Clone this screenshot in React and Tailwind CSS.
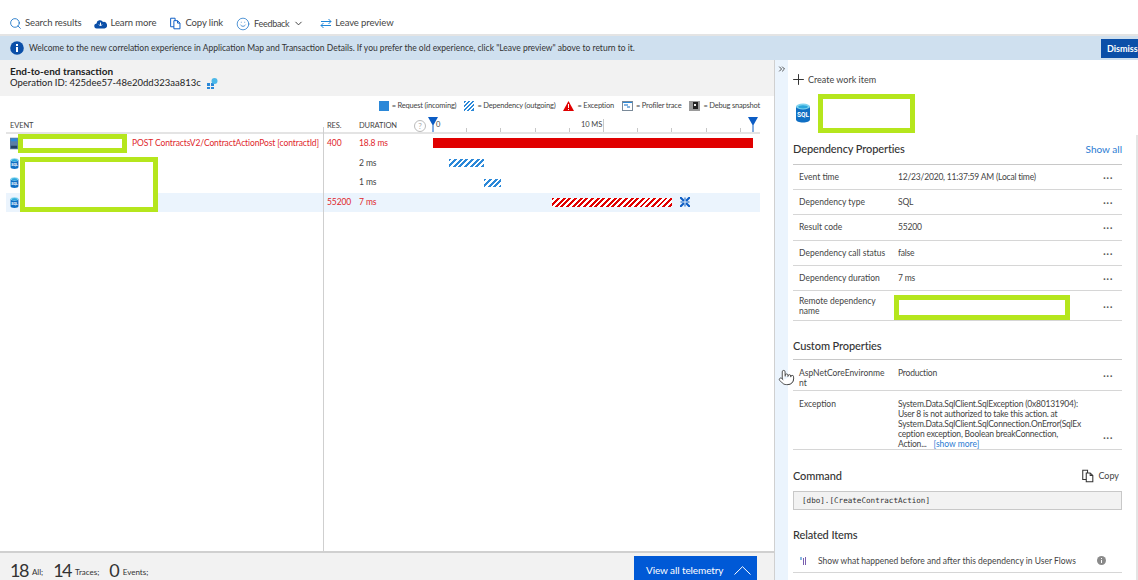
import React from 'react';
import { Search, Plus, ChevronDown, ChevronsRight, Smile, Pointer } from 'lucide-react';

const font = { fontFamily: 'Lato, "Noto Sans", sans-serif' };

const CopyIcon = ({ size = 14, stroke = '#0b5cc4' }) => (
  <svg width={size} height={size} viewBox="0 0 16 16" fill="none" stroke={stroke} strokeWidth="1.2">
    <path d="M2 1.500h5.500v10.500H2z" fill="#fff" />
    <path d="M6 4.500h4.500l3 3v7H6z" fill="#fff" />
    <path d="M10.500 4.500v3h3" />
  </svg>
);

const SqlIcon = ({ size = 14 }) => (
  <svg width={size} height={size * 1.25} viewBox="0 0 16 20">
    <path d="M1 3.500v13c0 1.700 3.100 3 7 3s7-1.300 7-3v-13z" fill="#0f6fc4" />
    <ellipse cx="8" cy="3.500" rx="7" ry="3" fill="#7fd3ef" />
    <ellipse cx="8" cy="3.800" rx="4.800" ry="1.600" fill="#2aa7dc" />
    <text x="8" y="13.500" textAnchor="middle" fontSize="6.500" fontWeight="700" fill="#fff" fontFamily="Roboto, sans-serif">SQL</text>
  </svg>
);

const ServerIcon = () => (
  <svg width="8" height="13" viewBox="0 0 9 13" className="shrink-0">
    <rect width="9" height="13" fill="#5a7ea6" />
    <rect x="1" y="1" width="7" height="3" fill="#2b88d8" />
    <rect x="1" y="9" width="7" height="3" fill="#23405f" />
  </svg>
);

const ToolItem = ({ icon, label, className = '' }) => (
  <div className={`flex items-center gap-[3px] text-[9.500px] tracking-[-0.1px] text-[#444] ${className}`}>
    {icon}
    <span>{label}</span>
  </div>
);

const Toolbar = () => (
  <div className="h-[36px] pt-[13px] pl-[9px] flex items-center gap-[13px] border-b-2 border-[#e4e4e4]">
    <ToolItem icon={<Search size={13} color="#0b6ac4" strokeWidth={1.5} />} label="Search results" />
    <ToolItem
      icon={
        <svg width="13" height="10" viewBox="0 0 13 10">
          <path d="M3 9.500a2.500 2.500 0 0 1-.5-5A3.500 3.500 0 0 1 9 3a3 3 0 0 1 1.500 6.500z" fill="#0b4fa8" />
          <path d="M6.500 3.500v3M5 5.500l1.500 1.500L8 5.500" stroke="#fff" fill="none" />
        </svg>
      }
      label="Learn more"
    />
    <ToolItem icon={<CopyIcon size={13} />} label="Copy link" />
    <div className="flex items-center gap-[4px] text-[9px] tracking-[-0.3px] text-[#444]">
      <Smile size={14} color="#0b6ac4" strokeWidth={1.2} />
      <span>Feedback</span>
      <ChevronDown size={11} color="#333" />
    </div>
    <ToolItem
      className="ml-[3px]"
      icon={
        <svg width="12" height="11" viewBox="0 0 12 11" fill="none" stroke="#1f86d8" strokeWidth="1">
          <path d="M1 3.500h10M8.500 1l2.500 2.500L8.500 6M11 7.500H1M3.500 5L1 7.500 3.500 10" />
        </svg>
      }
      label="Leave preview"
    />
  </div>
);

const Banner = () => (
  <div className="h-[24px] bg-[#cfe0ef] flex items-center pl-[10px] text-[8.500px] text-[#333]">
    <svg width="14" height="14" viewBox="0 0 14 14" className="mr-[5px]">
      <circle cx="7" cy="7" r="6.800" fill="#0b4fa8" />
      <rect x="6" y="6" width="2" height="5" fill="#fff" />
      <rect x="6" y="3" width="2" height="2" fill="#fff" />
    </svg>
    <span>Welcome to the new correlation experience in Application Map and Transaction Details. If you prefer the old experience, click "Leave preview" above to return to it.</span>
    <div className="ml-auto w-[37px] h-[19px] bg-[#0b4fa8] text-white font-bold text-[9px] leading-[19px] pl-[6px] whitespace-nowrap">Dismiss</div>
  </div>
);

const LegendItem = ({ icon, label }) => (
  <div className="flex items-center gap-[3px]">
    {icon}
    <span>{label}</span>
  </div>
);

const Legend = () => (
  <div className="h-[19px] flex items-center justify-end gap-[8px] pr-[14px] text-[7.500px] tracking-[-0.2px] text-[#444]">
    <LegendItem icon={<div className="w-[10px] h-[10px] bg-[#2b88d8]" />} label="= Request (incoming)" />
    <LegendItem
      icon={<div className="w-[10px] h-[10px] bg-[repeating-linear-gradient(135deg,#2b88d8_0,#2b88d8_1.500px,#fff_1.500px,#fff_3px)]" />}
      label="= Dependency (outgoing)"
    />
    <LegendItem
      icon={
        <svg width="11" height="10" viewBox="0 0 11 10">
          <path d="M5.500 0L11 10H0z" fill="#e00000" />
          <rect x="5" y="3" width="1" height="4" fill="#fff" />
          <rect x="5" y="8" width="1" height="1" fill="#fff" />
        </svg>
      }
      label="= Exception"
    />
    <LegendItem
      icon={
        <svg width="11" height="10" viewBox="0 0 11 10" fill="none">
          <rect x=".5" y=".5" width="10" height="9" stroke="#7a8a99" fill="#fff" />
          <path d="M1 1.500h9" stroke="#2b88d8" />
          <path d="M2 4h4M5 6h3" stroke="#0b6ac4" />
        </svg>
      }
      label="= Profiler trace"
    />
    <LegendItem
      icon={
        <svg width="11" height="10" viewBox="0 0 11 10">
          <rect width="11" height="10" fill="#9a9a9a" />
          <rect x="4" y="1" width="5" height="7" fill="#222" />
          <rect x="5" y="3" width="2" height="2" fill="#eee" />
        </svg>
      }
      label="= Debug snapshot"
    />
  </div>
);

const Marker = () => (
  <svg width="10" height="15" viewBox="0 0 10 15" className="relative">
    <path d="M0 0h10L5.500 8v7h-1V8z" fill="#0b5cc4" />
  </svg>
);

const ticks = [0, 1, 2, 3, 4, 5, 6, 7, 8];

const TableHeader = () => (
  <div className="h-[19px] ml-[6px] w-[754px] flex text-[7.500px] tracking-[-0.1px] text-[#444] border-b-2 border-[#e4e4e4]">
    <div className="w-[321px] pl-[4px] pt-[5px]">EVENT</div>
    <div className="w-[32px] pt-[5px]">RES.</div>
    <div className="w-[69px] pt-[5px]">DURATION</div>
    <div className="relative flex-1 flex items-end justify-between pr-[2px]">
      <Marker />
      <div className="absolute left-[5px] bottom-0 flex items-end">
        {ticks.map((t) => (
          <div key={t} className={`w-[34.200px] border-r border-[#c8c8c8] ${t === 4 ? 'h-[13px]' : 'h-[4px]'}`} />
        ))}
      </div>
      <span className="absolute left-[8px] top-[4px]">0</span>
      <span className="absolute left-[153px] top-[4px]">10 MS</span>
      <Marker />
    </div>
  </div>
);

const Row = ({ event, res, duration, red, selected, children }) => (
  <div className={`h-[19.500px] ml-[6px] w-[754px] flex items-center text-[8.500px] tracking-[-0.1px] ${selected ? 'bg-[#ebf4fd]' : ''} ${red ? 'text-[#e0262b]' : 'text-[#444]'}`}>
    <div className="w-[321px] pl-[4px] flex items-center whitespace-nowrap">{event}</div>
    <div className="w-[32px]">{res}</div>
    <div className="w-[74px]">{duration}</div>
    <div className="flex-1 flex items-center">{children}</div>
  </div>
);

const hatchBlue = 'bg-[repeating-linear-gradient(135deg,#2b88d8_0,#2b88d8_2px,#fff_2px,#fff_4px)]';
const hatchRed = 'bg-[repeating-linear-gradient(135deg,#e00000_0,#e00000_2px,#fff_2px,#fff_4px)]';

const Timeline = () => (
  <div className="relative flex-1 min-h-0">
    <Legend />
    <TableHeader />
    <Row
      red
      res="400"
      duration="18.8 ms"
      event={
        <>
          <ServerIcon />
          <div className="w-[109px] h-[19px] mr-[5px] border-[5px] border-[#b5e61d] bg-white shrink-0" />
          <span>POST ContractsV2/ContractActionPost [contractId]</span>
        </>
      }
    >
      <div className="w-[320px] h-[10px] mb-[2px] bg-[#e00000]" />
    </Row>
    <Row event={<SqlIcon size={9} />} duration="2 ms">
      <div className={`ml-[16px] w-[35px] h-[8px] ${hatchBlue}`} />
    </Row>
    <Row event={<SqlIcon size={9} />} duration="1 ms">
      <div className={`ml-[51px] w-[17px] h-[8px] ${hatchBlue}`} />
    </Row>
    <Row red selected event={<SqlIcon size={9} />} res="55200" duration="7 ms">
      <div className={`ml-[119px] w-[120px] h-[9px] ${hatchRed}`} />
      <svg width="10" height="10" viewBox="0 0 10 10" className="ml-[8px]" fill="#0b5cc4">
        <path d="M0 0h1.500L4 2.500V.5h.5V4.500H.5V4h2L0 1.500zM10 0v1.500L7.500 4h2v.5H5.500V.5H6v2L8.500 0zM0 10V8.500L2.500 6h-2v-.5h4v4H4v-2L1.500 10zM10 10H8.500L6 7.500v2h-.5v-4h4V6h-2L10 8.500z" />
      </svg>
    </Row>
    {/* redaction box over the three SQL rows */}
    <div className="absolute left-[20px] top-[61px] w-[138px] h-[55px] border-[5px] border-[#b5e61d] bg-white" />
    {/* column divider */}
    <div className="absolute left-[323px] top-[31px] bottom-0 w-px bg-[#cfcfcf]" />
    <div className="absolute left-[414px] top-[24px] w-[12px] h-[12px] rounded-full border border-[#bbb] text-[8px] leading-[10px] text-center text-[#aaa]">?</div>
  </div>
);

const Footer = () => (
  <div className="h-[29px] border-t-2 border-[#d0d0d0] bg-[#f2f2f2] flex items-end pl-[10px] text-[#333]">
    <span className="text-[18px] leading-[20px] tracking-[-1.500px]">18</span>
    <span className="text-[8px] ml-[4px] mb-[2px] mr-[10px]">All;</span>
    <span className="text-[18px] leading-[20px] tracking-[-1.500px]">14</span>
    <span className="text-[8px] ml-[4px] mb-[2px] mr-[10px]">Traces;</span>
    <span className="text-[18px] leading-[20px]">0</span>
    <span className="text-[8px] ml-[3px] mb-[2px]">Events;</span>
    <div className="ml-auto mr-[17px] w-[123px] h-[24px] bg-[#0059d6] text-white text-[10px] tracking-[-0.1px] flex items-center pl-[12px] pt-[4px]">
      <span>View all telemetry</span>
      <svg width="17" height="9" viewBox="0 0 17 9" fill="none" stroke="#fff" strokeWidth="1" className="ml-auto mr-[6px]">
        <path d="M.5 8.500L8.500 .7l8 7.800" />
      </svg>
    </div>
  </div>
);

const LeftPane = () => (
  <div className="w-[774px] shrink-0 flex flex-col">
    <div className="h-[36px] bg-[#f2f2f2] pl-[10px] pt-[5px] text-[#222] text-[9.500px] leading-[12px]">
      <div className="font-bold text-[10px]">End-to-end transaction</div>
      <div className="flex items-center gap-[6px]">
        <span>Operation ID: 425dee57-48e20dd323aa813c</span>
        <svg width="11" height="11" viewBox="0 0 11 11">
          <rect y="5" width="3" height="3" fill="#2b88d8" />
          <rect x="4" y="5" width="3" height="3" fill="#2b88d8" />
          <rect y="9" width="3" height="2" fill="#2b88d8" />
          <rect x="4" y="9" width="3" height="2" fill="#2b88d8" />
          <circle cx="7.500" cy="3" r="3" fill="#4db8e8" />
        </svg>
      </div>
    </div>
    <Timeline />
    <Footer />
  </div>
);

const PropRow = ({ label, children, height = 'h-[25.400px]', align = 'items-center', dotsBottom }) => (
  <div className={`${height} flex ${align} border-b border-[#d6d6d6] pl-[6px] text-[8.500px] leading-[10px] text-[#444] relative`}>
    <div className="w-[86px] mr-[13px] shrink-0 break-all">{label}</div>
    <div className="w-[198px] shrink-0 whitespace-nowrap tracking-[-0.2px]">{children}</div>
    <div className={`absolute right-[9px] text-[11px] leading-none tracking-[0.5px] text-[#555] ${dotsBottom ? 'bottom-[6px]' : 'top-1/2 -translate-y-1/2'}`}>···</div>
  </div>
);

const Heading = ({ children, className = '' }) => (
  <div className={`text-[11px] tracking-[-0.1px] leading-[16px] font-medium text-[#333] ${className}`}>{children}</div>
);

const RightPane = () => (
  <div className="flex-1 relative pl-[5px] pr-[16px] text-[#333] overflow-hidden">
    <div className="flex items-center gap-[1.500px] mt-[13px] text-[9px] text-[#444]">
      <Plus size={17} strokeWidth={1.4} color="#333" className="-ml-[3.500px] -my-[2px]" />
      <span>Create work item</span>
    </div>
    <div className="flex items-center gap-[7px] ml-[2px] mt-[7px]">
      <SqlIcon size={16} />
      <div className="w-[97px] h-[39px] border-[5px] border-[#b5e61d] bg-white" />
    </div>
    <div className="flex items-start justify-between mt-[8px] h-[24px] border-b border-[#c8c8c8]">
      <Heading>Dependency Properties</Heading>
      <span className="text-[10px] leading-[16px] text-[#2b7cd3]">Show all</span>
    </div>
    <PropRow label="Event time">12/23/2020, 11:37:59 AM (Local time)</PropRow>
    <PropRow label="Dependency type">SQL</PropRow>
    <PropRow label="Result code">55200</PropRow>
    <PropRow label={<span className="whitespace-nowrap">Dependency call status</span>}>false</PropRow>
    <PropRow label="Dependency duration">7 ms</PropRow>
    <PropRow label={<span className="break-normal">Remote dependency name</span>} height="h-[30px]">
      <div className="w-[176px] h-[25px] -ml-[4px] mt-[3px] border-[5px] border-[#b5e61d] bg-white" />
    </PropRow>
    <Heading className="mt-[17px] pb-[5px] border-b border-[#c8c8c8]">Custom Properties</Heading>
    <PropRow label="AspNetCoreEnvironment" height="h-[31px]" align="items-start pt-[8px]">Production</PropRow>
    <PropRow label="Exception" height="h-[59px]" align="items-start pt-[8px]" dotsBottom>
      System.Data.SqlClient.SqlException (0x80131904):<br />
      User 8 is not authorized to take this action. at<br />
      System.Data.SqlClient.SqlConnection.OnError(SqlEx<br />
      ception exception, Boolean breakConnection,<br />
      Action... <span className="text-[#2b7cd3] ml-[5px] tracking-normal">[show more]</span>
    </PropRow>
    <div className="flex items-center justify-between mt-[17.500px] h-[16px]">
      <Heading>Command</Heading>
      <div className="flex items-center gap-[3px] mr-[3px] text-[9px] text-[#444]">
        <CopyIcon size={14} stroke="#333" />
        <span>Copy</span>
      </div>
    </div>
    <div className="mt-[7px] h-[19px] border border-[#c8c8c8] bg-[#f2f2f2] pl-[8px] text-[7.600px] leading-[17px] text-[#333]" style={{ fontFamily: '"DejaVu Sans Mono", monospace' }}>
      [dbo].[CreateContractAction]
    </div>
    <Heading className="mt-[17.500px]">Related Items</Heading>
    <div className="flex items-center h-[26px] mt-[4px] pt-[2px] pl-[7px] border-b border-[#d6d6d6] text-[8.500px] text-[#444]">
      <svg width="7" height="8" viewBox="0 0 7 8" className="mr-[11px]">
        <rect width="2" height="3" fill="#8ab8e0" />
        <rect x="3" y="1" width="1" height="7" fill="#7a5fb0" />
        <rect x="5" width="1" height="8" fill="#7a5fb0" />
      </svg>
      <span>Show what happened before and after this dependency in User Flows</span>
      <svg width="9" height="9" viewBox="0 0 9 9" className="ml-auto mr-[16px]">
        <circle cx="4.500" cy="4.500" r="4.500" fill="#8a8a8a" />
        <rect x="4" y="4" width="1" height="3" fill="#fff" />
        <rect x="4" y="2" width="1" height="1" fill="#fff" />
      </svg>
    </div>
    <div className="absolute right-0 top-[75px] bottom-0 w-[2px] bg-[#e4e4e4]" />
  </div>
);

export default function App() {
  return (
    <div className="w-[1138px] h-[580px] bg-white overflow-hidden flex flex-col relative" style={font}>
      <Toolbar />
      <Banner />
      <div className="flex-1 flex min-h-0">
        <LeftPane />
        <div className="w-[14px] shrink-0 border-l border-[#d0d0d0] bg-[#ebf4fd] flex justify-center pt-[4px]">
          <ChevronsRight size={10} color="#333" className="h-[10px]" />
        </div>
        <RightPane />
      </div>
      {/* mouse pointer from the capture */}
      <Pointer size={17} fill="#fff" color="#333" strokeWidth={1.2} className="absolute left-[778px] top-[369px]" />
    </div>
  );
}
